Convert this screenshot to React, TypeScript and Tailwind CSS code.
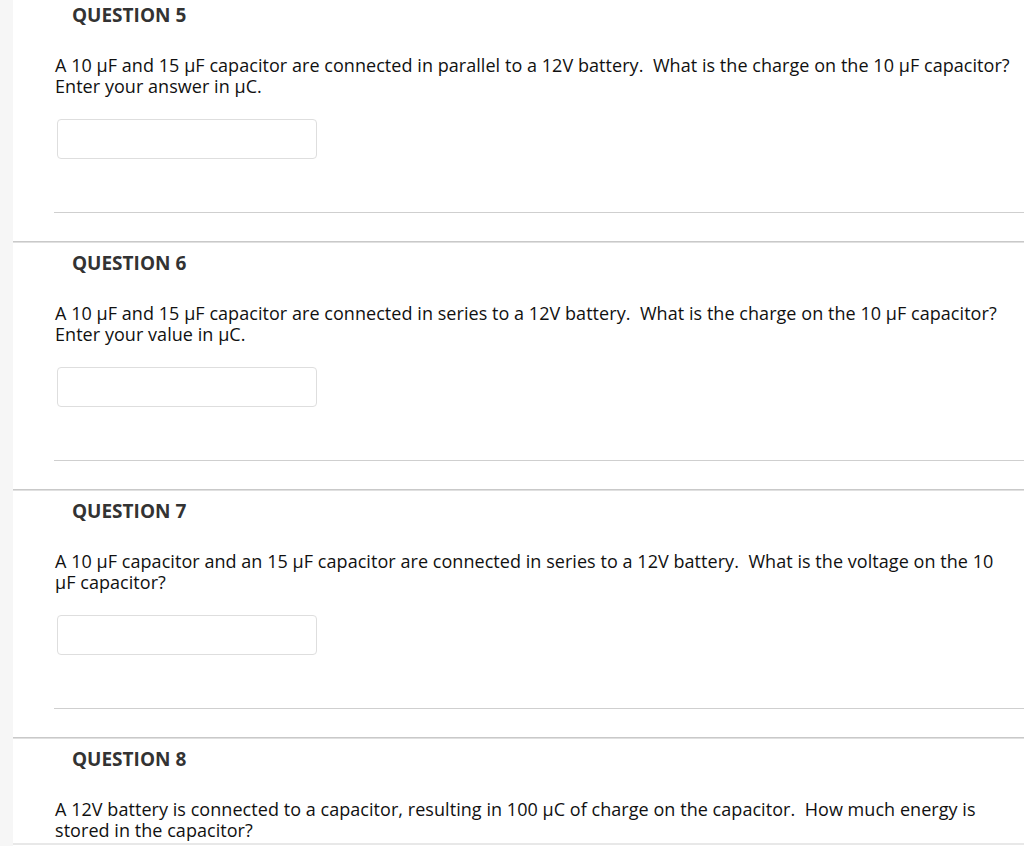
import React from 'react';

const questions = [
  {
    num: 5,
    text: 'A 10 µF and 15 µF capacitor are connected in parallel to a 12V battery.  What is the charge on the 10 µF capacitor? Enter your answer in µC.',
  },
  {
    num: 6,
    text: 'A 10 µF and 15 µF capacitor are connected in series to a 12V battery.  What is the charge on the 10 µF capacitor? Enter your value in µC.',
  },
  {
    num: 7,
    text: 'A 10 µF capacitor and an 15 µF capacitor are connected in series to a 12V battery.  What is the voltage on the 10 µF capacitor?',
  },
];

const App = () => {
  return (
    <div
      className="flex min-h-screen bg-white text-[#111]"
      style={{ fontFamily: '"Open Sans", "Noto Sans", sans-serif' }}
    >
      {/* left gutter */}
      <div className="w-[13px] shrink-0 bg-[#f6f6f6]" />

      <div className="flex-1">
        {questions.map((q, i) => (
          <div key={q.num} className={i === 0 ? 'pt-[3px]' : 'pt-[8px]'}>
            <h2 className="pl-[59px] text-[19px] font-bold leading-6 text-[#333]">
              QUESTION {q.num}
            </h2>
            <p className="mt-[28px] pl-[42px] pr-[12px] text-[18px] leading-[21px] tracking-[0.05px] whitespace-pre-wrap">
              {q.text}
            </p>
            <div className="ml-[44px] mt-[22px] h-[40px] w-[260px] rounded border border-[#dedede] bg-white" />
            <div className="ml-[41px] mt-[53px] border-t border-[#cfcfcf]" />
            <div className="mt-[28px] h-[2px] border-t border-[#c9c9c9] bg-[#e0e0e0]" />
          </div>
        ))}

        {/* Question 8 */}
        <div className="pt-[8px]">
          <h2 className="pl-[59px] text-[19px] font-bold leading-6 text-[#333]">
            QUESTION 8
          </h2>
          <p className="mt-[28px] pl-[42px] pr-[12px] text-[18px] leading-[21px] tracking-[0.05px] whitespace-pre-wrap">
            {'A 12V battery is connected to a capacitor, resulting in 100 µC of charge on the capacitor.  How much energy is stored in the capacitor?'}
          </p>
          <div className="mt-[2px] h-[2px] bg-[#e8e8e8]" />
        </div>
      </div>
    </div>
  );
};

export default App;
